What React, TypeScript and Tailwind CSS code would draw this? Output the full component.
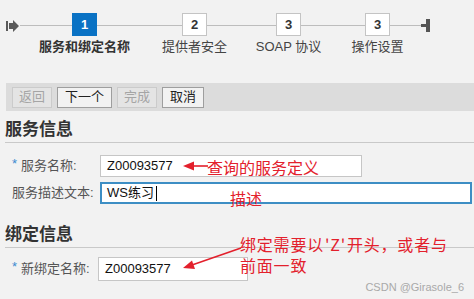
import type { ReactNode } from "react";

const UI = { fontFamily: '"Liberation Sans", "Noto Sans CJK SC", sans-serif' };
const NOTE = { fontFamily: '"Noto Sans CJK SC", "Liberation Serif", serif' };

function Line({ w }: { w: number }) {
	return <div className="mt-[12px] h-px bg-[#bdbdbd]" style={{ width: w }} />;
}

function Step({ n, label, active }: { n: string; label: string; active?: boolean }) {
	return (
		<div className="flex w-[25px] flex-col items-center">
			<div
				className={
					active
						? "flex h-[23px] w-[25px] items-center justify-center bg-[#0a72c4] text-[13px] font-bold text-white"
						: "flex h-[23px] w-[25px] items-center justify-center border border-[#c4c4c4] bg-white text-[13px] font-bold text-[#333]"
				}
			>
				{n}
			</div>
			<div
				className={
					active
						? "mt-[2px] whitespace-nowrap text-[13px] font-bold leading-[18px] text-[#333]"
						: "mt-[2px] whitespace-nowrap text-[13px] leading-[18px] text-[#444]"
				}
			>
				{label}
			</div>
		</div>
	);
}

function Btn({ children, disabled }: { children: ReactNode; disabled?: boolean }) {
	return (
		<div
			className={
				disabled
					? "flex h-[21px] items-center border border-[#cbcbcb] bg-[#e4e4e4] px-[6px] text-[13px] text-[#a5a5a5]"
					: "flex h-[21px] items-center border border-[#9e9e9e] bg-[#f2f2f2] px-[7px] text-[13px] text-[#222]"
			}
		>
			{children}
		</div>
	);
}

function Heading({ children, mt }: { children: ReactNode; mt: string }) {
	return (
		<div className={`${mt} ml-[5px] border-b border-[#c9c9c9] text-[17px] font-bold leading-[24px] text-[#333]`}>
			{children}
		</div>
	);
}

function Star() {
	return <span className="relative -top-[2px] mr-[4px] text-[#3b8ad0]">*</span>;
}

export default function App() {
	return (
		<div className="relative h-[299px] w-[474px] overflow-hidden bg-[#f2f2f2]" style={UI}>
			{/* stepper */}
			<div className="flex h-[83px] items-start pl-[6px] pt-[13px]">
				<svg width="14" height="12" viewBox="0 0 14 12" className="mt-[7px]">
					<rect x="0" y="1" width="2" height="10" fill="#5a5a5a" />
					<path d="M3 3 H7 V0 L13 6 L7 12 V9 H3 Z" fill="#5a5a5a" />
				</svg>
				<Line w={52} />
				<Step n="1" label="服务和绑定名称" active />
				<Line w={85} />
				<Step n="2" label="提供者安全" />
				<Line w={69} />
				<Step n="3" label="SOAP 协议" />
				<Line w={64} />
				<Step n="3" label="操作设置" />
				<Line w={31} />
				<svg width="10" height="13" viewBox="0 0 10 13" className="mt-[6px]">
					<rect x="0" y="5" width="6" height="3" fill="#555" />
					<rect x="5" y="0" width="4" height="13" fill="#555" />
				</svg>
			</div>

			{/* toolbar */}
			<div className="ml-[6px] flex h-[28px] items-center gap-[5px] bg-[#dcdcdc] pl-[6px]">
				<Btn disabled>返回</Btn>
				<Btn>下一个</Btn>
				<Btn disabled>完成</Btn>
				<Btn>取消</Btn>
			</div>

			<Heading mt="mt-[7px]">服务信息</Heading>

			<div className="mt-[12px] flex items-center">
				<div className="w-[100px] pl-[12px] text-[13px] text-[#555]">
					<Star />
					服务名称:
				</div>
				<div className="flex h-[22px] w-[262px] items-center border border-[#c6c6c6] bg-white px-[6px] text-[13px] text-[#111]">
					Z00093577
				</div>
			</div>

			<div className="mt-[5px] flex items-center">
				<div className="w-[100px] pl-[12px] text-[13px] text-[#555]">服务描述文本:</div>
				<div className="flex h-[22px] w-[372px] items-center border-2 border-[#3d8ec4] bg-white px-[5px] text-[13px] text-[#111]">
					WS练习
					<span className="ml-[2px] h-[15px] w-px bg-black" />
				</div>
			</div>

			<Heading mt="mt-[19px]">绑定信息</Heading>

			<div className="mt-[9px] flex items-center">
				<div className="w-[98px] pl-[12px] text-[13px] text-[#555]">
					<Star />
					新绑定名称:
				</div>
				<div className="flex h-[24px] w-[150px] items-center border border-[#c6c6c6] bg-white px-[6px] text-[13px] text-[#111]">
					Z00093577
				</div>
			</div>

			{/* annotations */}
			<svg className="pointer-events-none absolute left-0 top-0" width="474" height="299">
				<line x1="208" y1="166" x2="192" y2="166" stroke="#e3202c" strokeWidth="1.6" />
				<path d="M183 166 L194 161.5 L194 170.5 Z" fill="#e3202c" />
				<line x1="241" y1="248" x2="192" y2="265" stroke="#e3202c" strokeWidth="1.6" />
				<path d="M183 268 L192 260.5 L195 269 Z" fill="#e3202c" />
			</svg>
			<div className="absolute left-[207px] top-[157px] text-[16px] leading-[20px] text-[#e3202c]" style={NOTE}>
				查询的服务定义
			</div>
			<div className="absolute left-[230px] top-[188px] text-[16px] leading-[20px] text-[#e3202c]" style={NOTE}>
				描述
			</div>
			<div
				className="absolute left-[240px] top-[234px] whitespace-nowrap text-[16px] leading-[21px] tracking-[0.8px] text-[#e3202c]"
				style={NOTE}
			>
				<div>
					绑定需要以<span className="mx-[1px]">'Z'</span>开头，或者与
				</div>
				<div>前面一致</div>
			</div>
			<div className="absolute right-[10px] top-[280px] whitespace-nowrap text-[11px] leading-[14px] text-[#a9a9a9]">
				CSDN @Girasole_6
			</div>
		</div>
	);
}
